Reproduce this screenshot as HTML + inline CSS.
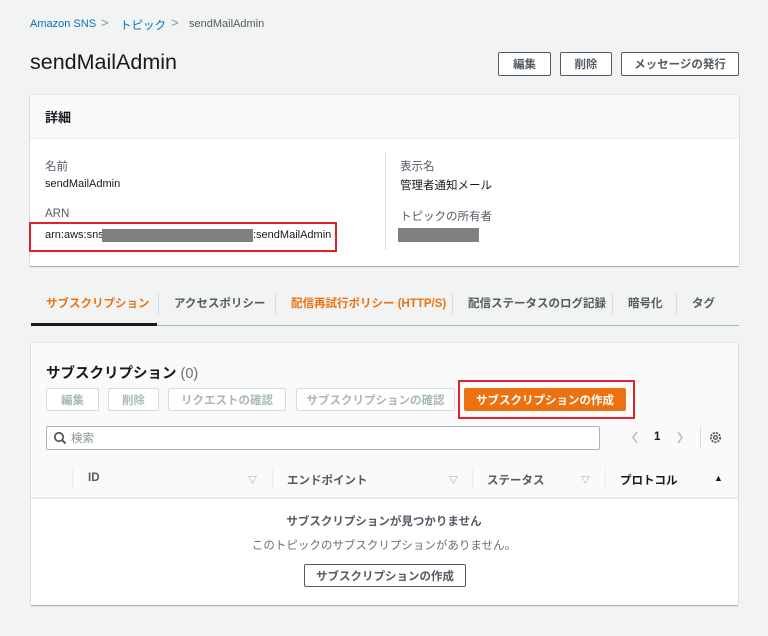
<!DOCTYPE html>
<html><head><meta charset="utf-8"><style>
*{margin:0;padding:0;box-sizing:border-box}
body{width:768px;height:636px;background:#f2f3f3;position:relative;overflow:hidden;font-family:"Liberation Sans","Noto Sans CJK JP",sans-serif;color:#16191f;font-size:12px}
.a{position:absolute;white-space:nowrap}
.btn{position:absolute;border:1px solid #545b64;background:#fff;border-radius:2px;font-weight:bold;font-size:11.5px;color:#545b64;display:flex;align-items:center;justify-content:center}
.dis{border-color:#d5dbdb;color:#aab7b8}
.card{position:absolute;background:#fff;box-shadow:0 1px 1px rgba(0,0,0,.3),0 0 1px rgba(0,0,0,.2)}
.lbl{color:#545b64;font-size:11.5px}
.v{position:absolute;width:1px;background:#d5dbdb}
.tab{position:absolute;top:295px;font-size:11.5px;font-weight:bold;color:#545b64}
</style></head><body>
<div class="a" style="left:30px;top:18px;color:#0073bb;font-size:11px">Amazon SNS</div>
<div class="a" style="left:101px;top:15px;color:#879596;font-size:13px">&gt;</div>
<div class="a" style="left:120px;top:17px;color:#0073bb;font-size:11.5px">トピック</div>
<div class="a" style="left:171px;top:15px;color:#879596;font-size:13px">&gt;</div>
<div class="a" style="left:189px;top:18px;color:#545b64;font-size:11px">sendMailAdmin</div>
<div class="a" style="left:30px;top:50px;font-size:21.5px">sendMailAdmin</div>
<div class="btn" style="left:498px;top:52px;width:53px;height:24px">編集</div>
<div class="btn" style="left:560px;top:52px;width:52px;height:24px">削除</div>
<div class="btn" style="left:621px;top:52px;width:118px;height:24px">メッセージの発行</div>

<div class="card" style="left:30px;top:95px;width:709px;height:171px">
<div style="height:44px;background:#fafafa;border-bottom:1px solid #eaeded"></div>
</div>
<div class="a" style="left:45px;top:107px;font-size:13px;font-weight:bold">詳細</div>
<div class="a lbl" style="left:45px;top:158px">名前</div>
<div class="a" style="left:45px;top:178px;font-size:11px">sendMailAdmin</div>
<div class="a lbl" style="left:45px;top:208px">ARN</div>
<div class="a" style="left:45px;top:229px;font-size:11px">arn:aws:sns:</div>
<div class="a" style="left:102px;top:229px;width:151px;height:13px;background:#808080"></div>
<div class="a" style="left:253px;top:229px;font-size:11px">:sendMailAdmin</div>
<div class="a" style="left:29px;top:222px;width:308px;height:30px;border:2px solid #e5202e"></div>
<div class="v" style="left:385px;top:152px;height:98px"></div>
<div class="a lbl" style="left:400px;top:158px">表示名</div>
<div class="a" style="left:400px;top:177px;font-size:11.5px">管理者通知メール</div>
<div class="a lbl" style="left:400px;top:208px">トピックの所有者</div>
<div class="a" style="left:398px;top:228px;width:81px;height:14px;background:#808080"></div>

<div class="tab" style="left:46px;color:#ec7211">サブスクリプション</div>
<div class="v" style="left:158px;top:293px;height:22px"></div>
<div class="tab" style="left:174px">アクセスポリシー</div>
<div class="v" style="left:275px;top:293px;height:22px"></div>
<div class="tab" style="left:291px;color:#ec7211">配信再試行ポリシー (HTTP/S)</div>
<div class="v" style="left:452px;top:293px;height:22px"></div>
<div class="tab" style="left:468px">配信ステータスのログ記録</div>
<div class="v" style="left:612px;top:293px;height:22px"></div>
<div class="tab" style="left:628px">暗号化</div>
<div class="v" style="left:676px;top:293px;height:22px"></div>
<div class="tab" style="left:692px">タグ</div>
<div class="a" style="left:31px;top:325px;width:708px;height:1px;background:#aab7b8"></div>
<div class="a" style="left:31px;top:323px;width:126px;height:3px;background:#16191f"></div>

<div class="card" style="left:31px;top:343px;width:707px;height:262px">
<div style="height:155px;background:#fafafa;border-bottom:1px solid #eaeded"></div>
</div>
<div class="a" style="left:46px;top:362px;font-size:14.5px;font-weight:bold">サブスクリプション <span style="font-weight:normal;color:#687078">(0)</span></div>
<div class="btn dis" style="left:46px;top:388px;width:53px;height:23px">編集</div>
<div class="btn dis" style="left:108px;top:388px;width:51px;height:23px">削除</div>
<div class="btn dis" style="left:168px;top:388px;width:118px;height:23px">リクエストの確認</div>
<div class="btn dis" style="left:296px;top:388px;width:159px;height:23px">サブスクリプションの確認</div>
<div class="btn" style="left:464px;top:388px;width:162px;height:23px;background:#ec7211;border-color:#ec7211;color:#fff">サブスクリプションの作成</div>
<div class="a" style="left:458px;top:380px;width:177px;height:39px;border:2px solid #e5202e"></div>
<div class="a" style="left:46px;top:426px;width:554px;height:24px;border:1px solid #aab7b8;border-radius:2px;background:#fff"></div>
<svg class="a" style="left:53px;top:431px" width="14" height="14" viewBox="0 0 14 14"><circle cx="6" cy="6" r="4.2" fill="none" stroke="#545b64" stroke-width="1.8"/><path d="M9 9l3.5 3.5" stroke="#545b64" stroke-width="2"/></svg>
<div class="a" style="left:71px;top:430px;color:#879596;font-size:11.5px">検索</div>
<svg class="a" style="left:631px;top:431px" width="8" height="13" viewBox="0 0 8 13"><path d="M6 1L2 6.5 6 12" fill="none" stroke="#aab7b8" stroke-width="1.3"/></svg>
<div class="a" style="left:654px;top:431px;font-weight:bold;font-size:11.5px">1</div>
<svg class="a" style="left:676px;top:431px" width="8" height="13" viewBox="0 0 8 13"><path d="M2 1l4 5.5L2 12" fill="none" stroke="#aab7b8" stroke-width="1.3"/></svg>
<div class="v" style="left:700px;top:427px;height:22px"></div>
<svg class="a" style="left:709px;top:431px" width="13" height="13" viewBox="0 0 14 14"><circle cx="7" cy="7" r="5" fill="none" stroke="#545b64" stroke-width="2" stroke-dasharray="2.2 1.2"/><circle cx="7" cy="7" r="2" fill="none" stroke="#545b64" stroke-width="1.5"/></svg>
<div class="a" style="left:31px;top:498px;width:707px;height:1px;background:#eaeded"></div>
<div class="v" style="left:72px;top:468px;height:22px;background:#eaeded"></div>
<div class="v" style="left:272px;top:468px;height:22px;background:#eaeded"></div>
<div class="v" style="left:472px;top:468px;height:22px;background:#eaeded"></div>
<div class="v" style="left:605px;top:468px;height:22px;background:#eaeded"></div>
<div class="a" style="left:88px;top:472px;font-weight:bold;font-size:11.5px;color:#545b64">ID</div>
<div class="a" style="left:248px;top:473px;font-size:9px;color:#879596">▽</div>
<div class="a" style="left:287px;top:472px;font-weight:bold;font-size:11.5px;color:#545b64">エンドポイント</div>
<div class="a" style="left:449px;top:473px;font-size:9px;color:#879596">▽</div>
<div class="a" style="left:487px;top:472px;font-weight:bold;font-size:11.5px;color:#545b64">ステータス</div>
<div class="a" style="left:581px;top:473px;font-size:9px;color:#879596">▽</div>
<div class="a" style="left:620px;top:472px;font-weight:bold;font-size:11.5px">プロトコル</div>
<div class="a" style="left:714px;top:473px;font-size:9px">▲</div>
<div class="a" style="left:0;width:768px;top:513px;text-align:center;font-weight:bold;font-size:11.5px;color:#545b64">サブスクリプションが見つかりません</div>
<div class="a" style="left:0;width:768px;top:537px;text-align:center;font-size:11.5px;color:#687078">このトピックのサブスクリプションがありません。</div>
<div class="btn" style="left:304px;top:564px;width:162px;height:23px">サブスクリプションの作成</div>
</body></html>
